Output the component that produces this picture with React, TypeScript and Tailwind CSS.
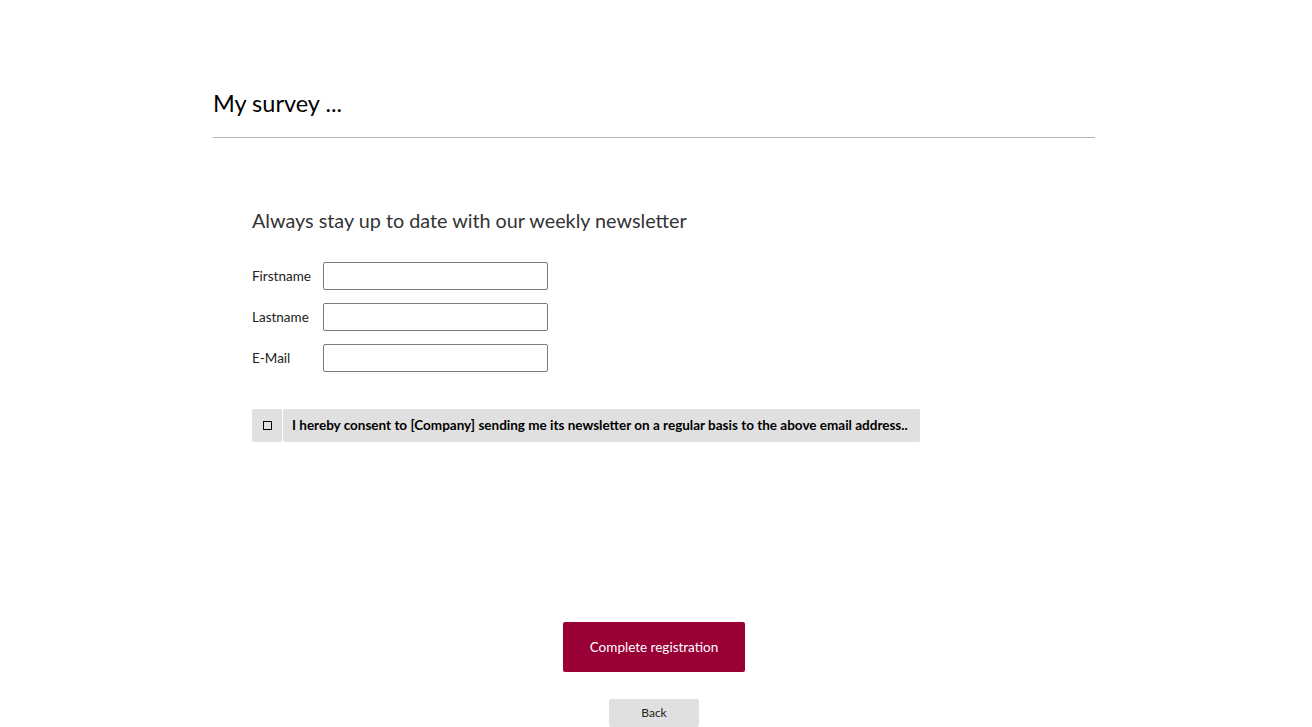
export default function App() {
  return (
    <div className="min-h-screen bg-white font-['Lato','Liberation_Sans',sans-serif] text-[#222]">
      <div className="mx-auto w-[886px] pr-[4px] pt-[89px]">
        <h1 className="text-[23.5px] leading-[28px] text-black">My survey ...</h1>
        <div className="mt-[20px] h-px bg-[#b4b4b4]" />

        <div className="pl-[39px] pt-[70px]">
          <h2 className="text-[19.8px] leading-[24px] text-[#333]">
            Always stay up to date with our weekly newsletter
          </h2>

          <div className="mt-[30px] flex flex-col gap-[13px]">
            {['Firstname', 'Lastname', 'E-Mail'].map((label) => (
              <div key={label} className="flex items-center">
                <label className="w-[71px] text-[13.5px] text-[#222]">{label}</label>
                <input
                  type="text"
                  className="h-[28px] w-[225px] rounded-[2px] border border-[#7a7a7a] bg-white px-2 text-[13px] outline-none"
                />
              </div>
            ))}
          </div>

          <div className="mt-[37px] flex h-[33px] gap-px">
            <div className="flex w-[30px] items-center justify-center rounded-[2px] bg-[#e0e0e0]">
              <span className="block h-[9px] w-[9px] border-[1.5px] border-black" />
            </div>
            <div className="flex items-center rounded-[2px] bg-[#e0e0e0] pl-[9px] pr-[12px] text-[13.5px] font-bold text-black">
              I hereby consent to [Company] sending me its newsletter on a regular basis to the above email address..
            </div>
          </div>
        </div>

        <div className="mt-[180px] flex flex-col items-center">
          <button className="h-[50px] w-[182px] rounded-[2px] bg-[#9a0036] text-[13.5px] text-white">
            Complete registration
          </button>
          <button className="mt-[27px] h-[28px] w-[90px] rounded-[2px] bg-[#e0e0e0] text-[12px] text-[#222]">
            Back
          </button>
        </div>
      </div>
    </div>
  );
}
